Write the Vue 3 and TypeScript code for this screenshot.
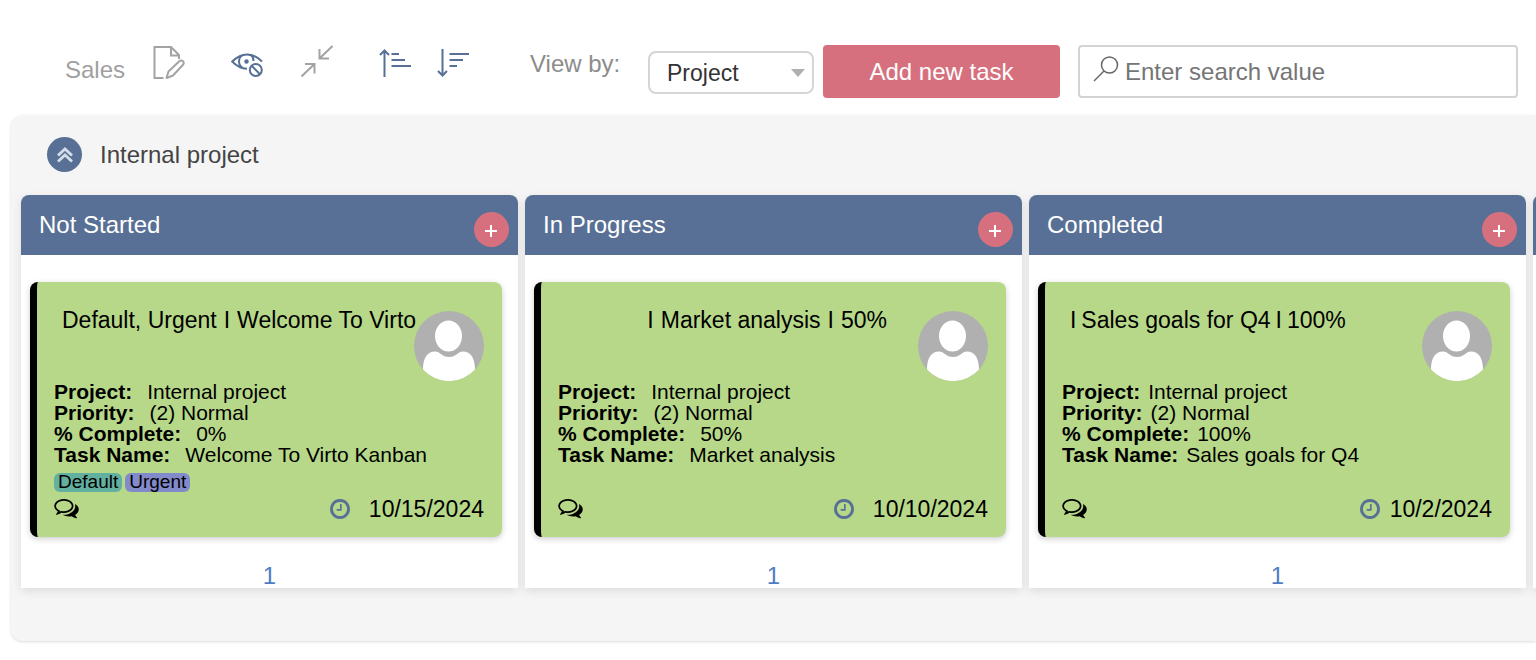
<script setup lang="ts">
import { ref } from 'vue'

interface Tag {
  label: string
  tone: string
}

interface Task {
  title: string[]
  titleAlign: 'start' | 'end'
  compact: boolean
  fields: { label: string; value: string }[]
  tags: Tag[]
  due: string
}

interface Column {
  name: string
  tasks: Task[]
}

const viewBy = ref('Project')
const search = ref('')

const fieldsOf = (complete: string, name: string) => [
  { label: 'Project:', value: 'Internal project' },
  { label: 'Priority:', value: '(2) Normal' },
  { label: '% Complete:', value: complete },
  { label: 'Task Name:', value: name },
]

const columns: Column[] = [
  {
    name: 'Not Started',
    tasks: [
      {
        title: ['Default, Urgent', 'I', 'Welcome To Virto'],
        titleAlign: 'start',
        compact: false,
        fields: fieldsOf('0%', 'Welcome To Virto Kanban'),
        tags: [
          { label: 'Default', tone: 'teal' },
          { label: 'Urgent', tone: 'violet' },
        ],
        due: '10/15/2024',
      },
    ],
  },
  {
    name: 'In Progress',
    tasks: [
      {
        title: ['I', 'Market analysis', 'I', '50%'],
        titleAlign: 'end',
        compact: false,
        fields: fieldsOf('50%', 'Market analysis'),
        tags: [],
        due: '10/10/2024',
      },
    ],
  },
  {
    name: 'Completed',
    tasks: [
      {
        title: ['I', 'Sales goals for Q4', 'I', '100%'],
        titleAlign: 'start',
        compact: true,
        fields: fieldsOf('100%', 'Sales goals for Q4'),
        tags: [],
        due: '10/2/2024',
      },
    ],
  },
]
</script>

<template>
  <main class="page">
    <header class="toolbar">
      <h1 class="board-name">Sales</h1>
      <div class="tools">
        <button type="button" class="tool muted" aria-label="Edit board">
          <svg viewBox="0 0 32 36" fill="none" stroke="currentColor" stroke-width="2">
            <path d="M10.500 33H1.500V2H18l8 8v4M18 2v8.500h8" />
            <path d="M13.500 33l2-6.500L26 16.500c3-2.500 6.200 .7 3.800 3.500L20 30.500z" stroke-linejoin="round" />
          </svg>
        </button>
        <button type="button" class="tool" aria-label="Hide empty">
          <svg viewBox="0 0 32 36" fill="none" stroke="currentColor" stroke-width="2">
            <path d="M31 16.500C26 11.500 21 9.500 16 9.500S6.500 11.500 1.200 16.500C6 21.500 10 23.500 16 23.800" />
            <path d="M11.800 10a7.500 7.500 0 0 0 0 13M20 10a7.500 7.500 0 0 1 2.500 6" />
            <circle cx="15.500" cy="16.500" r="2.200" fill="currentColor" stroke="none" />
            <circle cx="24.800" cy="25" r="6" />
            <path d="M20.600 20.800l8.400 8.400" />
          </svg>
        </button>
        <button type="button" class="tool muted collapse" aria-label="Collapse all">
          <svg viewBox="0 0 32 36" fill="none" stroke="currentColor" stroke-width="2">
            <path d="M31.500 1L19 13M18.500 4v9.500H28M.5 31.500L13 19.500M4 19h9.500v9.500" />
          </svg>
        </button>
        <button type="button" class="tool" aria-label="Sort ascending">
          <svg viewBox="0 0 32 36" fill="none" stroke="currentColor" stroke-width="2">
            <path d="M5.500 32V5.500M1 10l4.500-4.500L10 10M12.500 9H20M12.500 15H26M12.500 21H32" />
          </svg>
        </button>
        <button type="button" class="tool sort-desc" aria-label="Sort descending">
          <svg viewBox="0 0 32 36" fill="none" stroke="currentColor" stroke-width="2">
            <path d="M5.500 4v26.500M1 26l4.500 4.500L10 26M12.500 9H32M12.500 15H26M12.500 21H20" />
          </svg>
        </button>
      </div>
      <label class="view-label" for="view-by">View by:</label>
      <span class="select-wrap">
        <select id="view-by" v-model="viewBy">
          <option>Project</option>
          <option>Priority</option>
        </select>
        <svg class="caret" viewBox="0 0 14 8" aria-hidden="true"><path d="M0 0h14L7 8z" fill="#b0b0b0" /></svg>
      </span>
      <button type="button" class="add-task">Add new task</button>
      <label class="search">
        <svg viewBox="0 0 26 26" fill="none" stroke="#666" stroke-width="1.500" aria-hidden="true">
          <circle cx="16.500" cy="9" r="8" />
          <path d="M11 15L1 25" />
        </svg>
        <input v-model="search" type="text" placeholder="Enter search value" aria-label="Enter search value" />
      </label>
    </header>

    <section class="lane">
      <div class="lane-head">
        <button type="button" class="lane-toggle" aria-label="Collapse lane">
          <svg viewBox="0 0 16 16" fill="none" stroke="currentColor" stroke-width="2.800">
            <path d="M1 8.500L8 2l7 6.500M1 14.500L8 8l7 6.500" />
          </svg>
        </button>
        <h2>Internal project</h2>
      </div>

      <div class="columns">
        <section v-for="column in columns" :key="column.name" class="column">
          <header class="column-head">
            <h3>{{ column.name }}</h3>
            <button type="button" class="add" :aria-label="`Add task to ${column.name}`">
              <svg viewBox="0 0 12 12" stroke="currentColor" stroke-width="2"><path d="M6 0v12M0 6h12" /></svg>
            </button>
          </header>
          <div class="column-body">
            <article
              v-for="task in column.tasks"
              :key="task.due"
              class="card"
              :class="{ compact: task.compact }"
            >
              <div class="card-head">
                <h4 class="title" :class="task.titleAlign">
                  <span v-for="(part, i) in task.title" :key="i">{{ part }}</span>
                </h4>
                <svg class="avatar" viewBox="0 0 70 70" role="img" aria-label="Assignee">
                  <circle cx="35" cy="35" r="35" fill="#b0b0b0" />
                  <path
                    d="M9 58.500C9 46 14 40.500 21 40.500c5 0 7 5.500 14 5.500s9-5.500 14-5.500c7 0 12 5.500 12 18A35 35 0 0 1 9 58.500z"
                    fill="#fff"
                  />
                  <ellipse cx="34.500" cy="25" rx="13.500" ry="15.500" fill="#fff" />
                </svg>
              </div>
              <dl class="fields">
                <div v-for="field in task.fields" :key="field.label">
                  <dt>{{ field.label }}</dt>
                  <dd>{{ field.value }}</dd>
                </div>
              </dl>
              <div class="tags">
                <span v-for="tag in task.tags" :key="tag.label" class="tag" :class="tag.tone">{{ tag.label }}</span>
              </div>
              <footer class="card-foot">
                <button type="button" class="comments" aria-label="Comments">
                  <svg viewBox="0 256 1792 1536" fill="currentColor">
                    <path
                      d="M704 384q-153 0-286 52t-211.500 141-78.500 191q0 82 53 158t149 132l97 56-35 84q34-20 62-39l44-31 53 10q78 14 153 14 153 0 286-52t211.500-141 78.500-191-78.500-191-211.500-141-286-52zm0-128q191 0 353.500 68.500t256.500 186.500 94 257-94 257-256.500 186.500-353.500 68.500q-86 0-176-16-124 88-278 128-36 9-86 16h-3q-11 0-20.500-8t-11.500-21q-1-3-1-6.500t.5-6.500 2-6l2.500-5 3.500-5.500 4-5 4.500-5 4-4.500q5-6 23-25t26-29.500 22.500-29 25-38.500 20.500-44q-124-72-195-177t-71-224q0-139 94-257t256.500-186.500 353.500-68.500zm822 1169q10 24 20.500 44t25 38.500 22.500 29 26 29.500 23 25q1 1 4 4.500t4.500 5 4 5 3.500 5.500l2.500 5 2 6 .5 6.500-1 6.500q-3 14-13 22t-22 7q-50-7-86-16-154-40-278-128-90 16-176 16-271 0-472-132 58 4 88 4 161 0 309-45t264-129q125-92 192-212t67-254q0-77-23-152 129 71 204 178t75 230q0 120-71 224.500t-195 176.500z"
                    />
                  </svg>
                </button>
                <div class="due">
                  <svg viewBox="128 128 1536 1536" fill="currentColor" aria-hidden="true">
                    <path
                      d="M1024 544v448q0 14-9 23t-23 9h-320q-14 0-23-9t-9-23v-64q0-14 9-23t23-9h224v-352q0-14 9-23t23-9h64q14 0 23 9t9 23zm416 352q0-148-73-273t-198-198-273-73-273 73-198 198-73 273 73 273 198 198 273 73 273-73 198-198 73-273zm224 0q0 209-103 385.500t-279.500 279.500-385.500 103-385.500-103-279.500-279.500-103-385.500 103-385.500 279.500-279.500 385.500-103 385.500 103 279.500 279.500 103 385.500z"
                    />
                  </svg>
                  <time>{{ task.due }}</time>
                </div>
              </footer>
            </article>
            <a class="count" href="#">{{ column.tasks.length }}</a>
          </div>
        </section>
        <section class="column" aria-label="Next column">
          <header class="column-head"></header>
        </section>
      </div>
    </section>
  </main>
</template>

<style>
body {
  margin: 0;
  background: #fff;
  overflow-x: hidden;
}
</style>

<style scoped>
.page {
  font-family: 'Liberation Sans', Arial, Helvetica, sans-serif;
  font-size: 24px;
  overflow: hidden;
  padding-bottom: 19px;
}

.page *,
.page *::before {
  box-sizing: border-box;
}

button,
select,
input {
  font: inherit;
  margin: 0;
  border: 0;
  padding: 0;
  background: none;
}

button {
  cursor: pointer;
}

svg {
  display: block;
  flex: none;
}

h1,
h2,
h3,
h4,
dl,
dd {
  margin: 0;
  font-size: inherit;
  font-weight: 400;
}

.toolbar {
  display: flex;
  align-items: flex-start;
  padding: 45px 18px 17px 65px;
}

.board-name {
  flex: none;
  width: 88px;
  padding-top: 11px;
  line-height: 28px;
  color: #a0a0a0;
}

.tools {
  display: flex;
  flex: none;
  width: 377px;
}

.tool {
  width: 32px;
  height: 36px;
  margin-right: 46px;
  color: #587095;
}

.tool.muted {
  color: #a3a3a3;
}

.tool.collapse {
  margin-left: -8px;
}

.tool.sort-desc {
  margin: 0 0 0 -20px;
}

.tool svg {
  width: 32px;
  height: 36px;
}

.view-label {
  flex: none;
  width: 118px;
  padding-top: 5px;
  line-height: 28px;
  color: #8c8c8c;
}

.select-wrap {
  position: relative;
  flex: none;
  width: 166px;
  margin: 6px 9px 0 0;
}

select {
  display: block;
  width: 100%;
  height: 43px;
  padding: 0 36px 0 17px;
  border: 2px solid #d5d5d5;
  border-radius: 8px;
  background: #fff;
  color: #333;
  font-size: 23px;
  appearance: none;
}

.caret {
  position: absolute;
  top: 18px;
  right: 9px;
  width: 14px;
  height: 8px;
  pointer-events: none;
}

.add-task {
  flex: none;
  width: 237px;
  height: 53px;
  margin-right: 18px;
  border-radius: 4px;
  background: #d6707e;
  color: #fff;
}

.search {
  display: flex;
  flex: 1;
  min-width: 0;
  height: 53px;
  padding-left: 13px;
  border: 2px solid #d2d4d4;
  border-radius: 4px;
}

.search svg {
  width: 26px;
  height: 26px;
  margin: 9px 6px 0 0;
}

.search input {
  flex: 1;
  min-width: 0;
  outline: 0;
  color: #333;
}

.search input::placeholder {
  color: #757575;
  opacity: 1;
}

.lane {
  margin-left: 11px;
  padding: 22px 0 53px 10px;
  border-radius: 12px 0 0 12px;
  background: #f5f5f5;
  box-shadow: 0 1px 3px rgba(0, 0, 0, 0.14);
}

.lane-head {
  display: flex;
  align-items: center;
  gap: 18px;
  padding: 0 0 23px 26px;
  line-height: 35px;
  color: #444;
}

.lane-toggle {
  display: grid;
  place-items: center;
  width: 35px;
  height: 35px;
  border-radius: 50%;
  background: #587095;
  color: #d5dde9;
}

.lane-toggle svg {
  width: 16px;
  height: 16px;
}

.columns {
  display: grid;
  grid-auto-flow: column;
  grid-auto-columns: calc((100% - 24px) / 3);
  gap: 7px;
}

.column {
  border-radius: 8px 8px 0 0;
  background: #fff;
  box-shadow: 0 3px 10px rgba(0, 0, 0, 0.1);
}

.column-head {
  display: flex;
  align-items: center;
  justify-content: space-between;
  height: 60px;
  padding: 0 9px 0 18px;
  border-radius: 8px 8px 0 0;
  background: #587095;
  color: #fff;
}

.add {
  display: grid;
  place-items: center;
  width: 35px;
  height: 35px;
  margin-top: 9px;
  padding-top: 3px;
  border-radius: 50%;
  background: #d6707e;
  color: #fff;
}

.add svg {
  width: 12px;
  height: 12px;
}

.column-body {
  padding: 27px 16px 0 9px;
}

.card {
  padding: 29px 18px 15px 17px;
  border-left: 7px solid #000;
  border-radius: 8px;
  background: #b7d889;
  box-shadow: 0 2px 6px rgba(0, 0, 0, 0.2);
  color: #000;
}

.card-head {
  display: flex;
  padding-left: 8px;
}

.title {
  display: flex;
  flex: 1;
  gap: 7px;
  min-width: 0;
  height: 28px;
  margin-top: -5px;
  font-size: 23px;
  line-height: 28px;
  white-space: nowrap;
}

.title.end {
  justify-content: flex-end;
  padding-right: 31px;
}

.compact .title {
  gap: 5px;
}

.avatar {
  width: 70px;
  height: 70px;
}

.fields {
  font-size: 21px;
  line-height: 21px;
}

.fields div {
  display: flex;
  gap: 15px;
}

.compact .fields div {
  gap: 8px;
}

.fields dt {
  font-weight: 700;
}

.tags {
  display: flex;
  gap: 3px;
  height: 19px;
  margin: 8px 0 4px;
  font-size: 19px;
  line-height: 18px;
}

.tag {
  padding: 0 4px;
  border-radius: 6px;
}

.tag.teal {
  background: #62b0a0;
}

.tag.violet {
  background: #838acb;
}

.card-foot {
  display: flex;
  align-items: center;
  justify-content: space-between;
  height: 26px;
}

.comments svg {
  width: 25px;
  height: 21px;
}

.due {
  display: flex;
  align-items: center;
  gap: 19px;
  font-size: 23px;
  line-height: 26px;
}

.compact .due {
  gap: 10px;
}

.due svg {
  width: 20px;
  height: 20px;
  color: #587095;
}

.count {
  display: block;
  padding: 27px 0 0 7px;
  line-height: 24px;
  text-align: center;
  text-decoration: none;
  color: #4f7dc4;
}
</style>
